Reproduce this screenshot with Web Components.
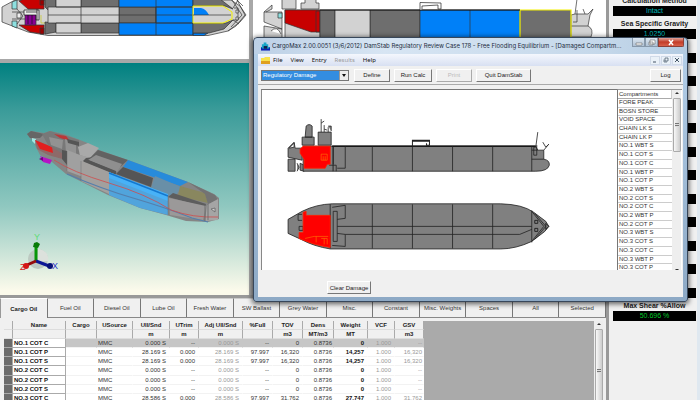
<!DOCTYPE html>
<html lang="en">
<head>
<meta charset="utf-8">
<title>CargoMax</title>
<style>
html,body{margin:0;height:100%;overflow:hidden}
body{font-family:"Liberation Sans",Arial,sans-serif;font-size:6px;color:#222;background:#f0f0f0}
</style>
</head>
<body>
<cargo-app></cargo-app>
<script>
const make = (name, html, setup) => {
  const t = document.createElement('template');
  t.innerHTML = html;
  customElements.define(name, class extends HTMLElement {
    constructor() {
      super();
      this.attachShadow({mode: 'open'}).append(t.content.cloneNode(true));
    }
    connectedCallback() { if (setup) setup.call(this, this.shadowRoot); }
  });
};

/* Colour-coded tank plan, seen from above */
make('tank-plan', `
<style>:host{display:block;background:#fff;overflow:hidden}svg{display:block;width:100%}</style>
<svg viewBox="0 0 249 59" stroke="#333" stroke-width=".7" aria-hidden="true">
<path d="M2 7 15 0H231L240 6 246 15 240 22 228 31 208 35.500H48L28 32 2 22Z" fill="#d2d2d2"/>
<path d="M12 2 17 0V9H12ZM12 21H17V28L12 26Z" fill="#8ee0e0"/>
<path d="M19 1 24-1H44V9H28ZM19 25H44V34L30 32Z" fill="#c80000"/>
<path d="M40 0H44V5H40ZM40 28H44V34H40Z" fill="#900"/>
<path d="M12 12H25M12 19H25M17 9 23 16 17 24" fill="none"/>
<path d="M17 13H21V18H17Z" fill="#eee"/>
<path d="M25 14H36V25H25Z" fill="#8a0094"/>
<path d="M24 10H39V20H36V15H24Z" fill="#eee" stroke="#111"/>
<path d="M26 12H37M28 15V24M32 15V24M37 9V20" stroke="#111"/>
<path d="M41 15V23H45" stroke="#c8c820" fill="none"/>
<path d="M45-1H56V7L48 10 45 7ZM81-1H119V7H81ZM45 22 56 23V32L45 34ZM81 23H119V33H81ZM119 7H156V23H119Z" fill="#6e6e6e"/>
<path d="M56-1H81V7H56ZM56 23H81V33H56ZM48 7H119V23H48Z" fill="#d2d2d2"/>
<path d="M81 7V23M48 15H156"/>
<path d="M119-1H193V7H119ZM119 23H193V35H119ZM156 7H193V23H156ZM193 33H208L204 35.500H193Z" fill="#0080f8"/>
<path d="M156-1V35M156 15H193"/>
<path d="M193-1H220L233 9 225 6H193ZM193 23H226L233 20 224 29 209 33H193Z" fill="#6e6e6e"/>
<path d="M193 6H223L232 12V19L223 23H193Z" fill="#d2d2d2" stroke="#f4f000" stroke-width="1"/>
<path d="M194 8H201Q206 9 209 15H194Z" fill="#0080f8" stroke="none"/>
<path d="M193 15H231" />
<path d="M233 8 238 0M233 20 239 24M234 8H238V20H233M243 6 237 0 245 15 236 26 228 31M232 0 242 15 231 27" fill="none"/>
<path d="M236 10H238V13H236ZM236 17H238V20H236Z" fill="#fff"/>
</svg>`);

/* Colour-coded tank profile, seen from the side */
make('tank-profile', `
<style>:host{display:block;background:#fff;overflow:hidden}svg{display:block;width:100%}</style>
<svg viewBox="253 0 353 60" stroke="#333" stroke-width=".7" aria-hidden="true">
<path d="M264 12 272 5V9L266 12M264 12H282V60H264V26L282 29 264 22Z" fill="#d2d2d2"/>
<path d="M278 13H282V18H278Z" fill="#8ee0e0"/>
<path d="M282-1H296V9H282ZM301 3H305V-1H316V3H319V9H301Z" fill="#d2d2d2"/>
<path d="M271 31Q277 25 281 34" fill="#fff"/>
<path d="M285 10H320V40H285Z" fill="#d2d2d2"/>
<path d="M285 10H320V32H311L285 23Z" fill="#c80000"/><path d="M316 11V32H320V11Z" fill="#c80000"/>
<path d="M320 10H335V60H320ZM370 10H420V60H370Z" fill="#6e6e6e"/>
<path d="M335 10H370V60H335Z" fill="#d2d2d2"/>
<path d="M420 10H520V60H420ZM470 10V60" fill="#0080f8"/>
<path d="M571 15 575 14H588L593 9 590 15 588 26Q594 29 591 37H571Z" fill="#d2d2d2"/>
<path d="M573 22H577V10M577-1 575 14M583 9 585 14M571 26H588" fill="none"/>
<path d="M520 10H571V60H520Z" fill="#6e6e6e" stroke="#f4f000" stroke-width="1.2"/>
<path d="M320 10H520" stroke="#111" stroke-width="1.2"/>
<path d="M420 10V2.500L441 3V9H438V5L422 6V9" fill="#fff" stroke="#222"/>
</svg>`);

/* Shaded model of the ship with the axis marker */
make('ship-model', `
<style>:host{display:block;overflow:hidden;background:linear-gradient(#008080,#3a9b99 20%,#90c8c0 62%,#fbfaeb 98%)}svg{display:block;width:100%}</style>
<svg viewBox="0 63 249 232" aria-hidden="true">
<path d="M27 134 31 131 44 133 50 131 64 134 80 140 90 144 93 148 128 160 188 182 214 194 219 198V219L208 222 186 221 166 215 140 208 108 195 84 183 66 174 52 162 40 155 34 143Z" fill="#858585"/>
<path d="M27 134 31 131 44 134 40 138 30 138Z" fill="#666"/>
<path d="M32 138 36 139 35 144 32 141Z" fill="#9fe8e2"/>
<path d="M35 140 50 146 66 151V160L48 155 37 149Z" fill="#8d6a69"/>
<path d="M35 140 52 147 53 153 40 149Z" fill="#e21f1f"/>
<path d="M42 134 50 131 70 137 79 140V160L65 155 48 145Z" fill="#777" opacity=".9"/>
<path d="M54 134 66 136 70 141 60 138Z" fill="#bd3737"/>
<path d="M49 137 63 140 62 149 51 145ZM65 139 76 143V157L66 153Z" fill="#929292"/>
<path d="M67 139 79 142V146L68 143ZM62 150 67 151V165L62 159Z" fill="#555"/>
<path d="M40 156 52 160 50 164 43 162Z" fill="#b514c5"/><path d="M39 159 43 157V161Z" fill="#780085"/>
<path d="M67 150 80 155 92 158 83 177 67 171Z" fill="#a0a0a0"/>
<path d="M78 147 88 143 99 148 90 158 80 155Z" fill="#a9a9a9"/>
<path d="M98 150 128 160 120 167 90 158Z" fill="#626262"/>
<path d="M94 157 119 166 116 173 83 161 86 158Z" fill="#575757"/>
<path d="M96 155 122 164 117 172 88 160Z" fill="#8f8f8f"/>
<path d="M86 159 116 171 116 175 83 162Z" fill="#555"/>
<path d="M82 161 109 172V194L81 181Z" fill="#a2a09e"/>
<path d="M128 160 188 182 180 186 123 167Z" fill="#278bdb"/>
<path d="M123 167 153 178 151 187 116 174Z" fill="#555"/>
<path d="M155 176 181 187 175 198 151 188Z" fill="#698fa7"/>
<path d="M109 172 168 196V215L140 208 109 195Z" fill="#51a4dc"/>
<path d="M109 172 168 194V201L109 178Z" fill="#48b2f7"/>
<path d="M109 173 168 196" stroke="#1378cf" stroke-width="1.500"/>
<path d="M180 186 205 193 208 203 178 196Z" fill="#89875f"/>
<path d="M173 193 206 204 205 207 168 197Z" fill="#5d5d5d"/>
<path d="M169 198 206 206 203 220 170 215Z" fill="#9b9999"/>
<path d="M188 182 215 195 218 200 208 204 205 194Z" fill="#737373"/>
<path d="M207 205 218 199V220L205 221Z" fill="#a5a5a5"/>
<path d="M67 174Q102 189 133 198T192 218L208 222" stroke="#547fac" fill="none" stroke-width="1.200"/>
<path d="M54 160Q72 172 109 183T171 210Q193 218 218 217" stroke="#cf4b4b" fill="none" stroke-width=".8"/>
<path d="M205 205V221M208 204V220M211 209 215 208V212Z" stroke="#666" fill="#ccc" stroke-width=".8"/>
<path d="M81 161V181M67 151V171M168 196V215" stroke="#666" stroke-width=".4"/>
<circle cx="38" cy="259" r="10" fill="#bcc9c1"/><path d="M38 249A10 10 0 0 1 48 261L37 262Z" fill="#dce1dc"/>
<path d="M36 261V247" stroke="#079607" stroke-width="3"/><path d="M33 247 34 243 37 242 40 244 38 248Z" fill="#087b08"/>
<path d="M36 261 49 266" stroke="#0b1696" stroke-width="3"/><ellipse cx="50" cy="266" rx="3" ry="3" fill="#061177"/>
<path d="M36 261 27 265" stroke="#950b0b" stroke-width="3"/><ellipse cx="26" cy="266" rx="3" ry="3" fill="#d41616"/>
<g font-family="Liberation Sans,sans-serif" font-size="9"><text x="34" y="240" fill="#5fdc78">Y</text><text x="52" y="269" fill="#2636c8">X</text><text x="20" y="270" fill="#d61818">Z</text></g>
</svg>`);

/* Grey profile and plan with the damaged compartment in red */
make('damage-view', `
<style>:host{display:block;background:#fff;overflow:hidden}svg{display:block;width:100%}</style>
<svg viewBox="262 90 354 179" fill="#808080" stroke="#222" stroke-width=".8" aria-hidden="true">
<path d="M288 148 294 142 295 148H302V160L288 157Z"/>
<path d="M289 148 294 143 294 147Z" fill="#fff"/>
<path d="M288 159H295V171H288ZM297 163 299 167 297 171M300 163V170L304 171V165Z"/>
<path d="M302 137H314V145H302ZM305 137 306 126Q309 123 312 126V137ZM318 132H331V145H318ZM321 132V119M321 123 324 121M324 132V125M328 132V127M331 131V126H328M324 129 327 130" />
<path d="M303 146H333V171H303Z"/>
<path d="M333 146H535L537 150H543V159Q549 160 548.500 165 547 171 535 171H333Z"/>
<path d="M332 146H535" stroke="#000" stroke-width="1.300"/>
<path d="M337 168H345V146M372 146V171M412 146V171M452 146V171M492 146V171M531 146V171M333 146V164M329 165H336V171" fill="none"/>
<path d="M300 149 303 146H330V164H327L325 168H304V159L300 153Z" fill="#f00" stroke="#f20"/>
<path d="M321 154H327V160H321ZM323 156V160M325 156V160" fill="none" stroke="#ff7a00" stroke-width=".6"/>
<path d="M412 146V140H429V145H426V143M412 141H429" fill="none" stroke-width="1"/>
<path d="M537 132 535 147H533V155H536V145M531 159H543M537 150H531M542 142 545 147 548 144 543 150" fill="none"/>
<path d="M288 219 302 211Q316 204 332 203.500H500Q522 204 533 212L545 221 548 226 544 231 531 241Q515 248.500 500 248.500H330Q314 246 301 239L288 233Z"/>
<path d="M330 204V248M332 207 345 205V218L337 219M337 233 345 234V246L332 245M333 211H337V241H333ZM337 226H531M345 234H519L531 229M372 204V248M412 204V248M452 204V248M492 204V248M531 210V242M531 211 543 226 531 241M534 213 545 226 534 239M302 214H298V220H302M299 226H303V230H299Z" fill="none"/>
<path d="M534 220H537V223H534ZM534 228H537V231H534ZM545 223 548 226 545 229Z" stroke="#111"/>
<path d="M303 212 306 211V215H330V247Q314 245 299 238V232H303Z" fill="#f00" stroke="#f20"/>
<path d="M305 238 314 236H328M316 236V242M321 238H327V244M324 238V244" fill="none" stroke="#ff7a00" stroke-width=".6"/>
</svg>`);

make('value-meter', `
<style>
:host{display:grid;grid-template-rows:1fr 10px;text-align:center}
b{align-self:end;font-size:7px;line-height:11px;white-space:nowrap;color:#222}
output{display:block;background:#000;color:var(--ink,#00b8b8);font-size:7px;line-height:10px}
</style><b><slot name="label"></slot></b><output><slot></slot></output>`);

make('side-panel', `
<style>
:host{display:block;background:#f0f0f0;border-left:3px solid #999;border-right:3px solid #dfe8f0;box-sizing:border-box;overflow:hidden}
div{display:flex;flex-direction:column;height:329px;margin:-8px 1px 0 4px}
value-meter{flex:1}.green{--ink:#00c828}
</style>
<div><value-meter><span slot="label">Calculation Method</span>Intact</value-meter>
<value-meter><span slot="label">Sea Specific Gravity</span>1.0250</value-meter>
${'<value-meter></value-meter>'.repeat(11)}
<value-meter class="green"><span slot="label">Max Shear %Allow</span>50.696 %</value-meter></div>`);

make('scroll-rail', `
<style>
:host{display:flex;flex-direction:column;align-items:center;background:#eee;width:9px}
i{width:0;border:2px solid transparent}
.up{border-bottom-color:#333;margin:2px 0 4px;border-top-width:0}
.down{border-top-color:#333;margin:4px 0 2px;border-bottom-width:0}
.thumb{box-sizing:border-box;width:8px;flex:0 0 var(--thumb,32%);border:1px solid #aaa;border-radius:1px;background:linear-gradient(90deg,#f8f8f8,#ccc);display:grid;place-items:center}
.thumb span{width:4px;height:4px;background:repeating-linear-gradient(#777 0 1px,#ddd 1px 2px)}
.rest{flex:1}
</style><i class="up"></i><div class="thumb"><span></span></div><div class="rest"></div><i class="down"></i>`);

make('tab-strip', `
<style>
:host{display:flex;background:#f0f0f0;border-bottom:1px solid #888}
button{flex:1;min-width:0;padding:0;margin:0;height:19px;border:0;border-right:1px solid #777;border-top:1px solid #ccc;background:#f0f0f0;font:6px "Liberation Sans",sans-serif;color:#333;white-space:nowrap}
button[aria-selected=true]{font-weight:bold;color:#222;border-top:1px solid #fff;margin-bottom:-1px;height:20px;border-left:1px solid #999}
</style>`, function (root) {
  root.host.setAttribute('role', 'tablist');
  ['Cargo Oil','Fuel Oil','Diesel Oil','Lube Oil','Fresh Water','SW Ballast','Grey Water','Misc.','Constant','Misc. Weights','Spaces','All','Selected'].forEach((n, i) => {
    const b = document.createElement('button');
    b.setAttribute('role', 'tab');
    b.setAttribute('aria-selected', String(i === 0));
    b.textContent = n;
    root.append(b);
  });
});

make('tank-table', `
<style>
:host{display:block}
table{table-layout:fixed;width:420px;height:82px;border-collapse:separate;border-spacing:0;background:#fff;font-size:6px;line-height:8px;color:#333}
th,td{padding:0 3px 0 0;border-right:1px solid #d4d4d4;border-bottom:1px solid #ddd;text-align:right;white-space:nowrap;overflow:hidden;box-sizing:border-box}
thead th{background:#f0f0f0;text-align:center;padding:0;border-right-color:#aaa;color:#222}
tbody th{text-align:left;padding:0 0 0 1px;color:#111;border-color:#aaa}
tbody td{border-right-color:transparent;border-bottom-color:#f2f2f2}
tbody td:first-child{background:#6b6b6b;border-color:#aaa}
td:nth-child(4){text-align:left;padding-left:1px}
td:nth-child(10){padding-right:1px}
td:nth-child(11){font-weight:bold;color:#111}
td:nth-child(7),td:nth-child(12),td:nth-child(13){color:#999}
td:nth-child(13){padding-right:1px}
tbody tr:first-child td:not(:first-child){background:#c6c6c6}
</style>
<table><colgroup></colgroup><thead></thead><tbody></tbody></table>`, function (root) {
  root.querySelector('colgroup').innerHTML = [9,53,31,36,37,29,44,30,30,31,34,27,29].map(w => `<col style="width:${w}px">`).join('');
  const row = (cells, tag) => '<tr>' + cells.map((c, i) => { const t = i === 1 ? 'th' : tag; return `<${t}>${c}</${t}>`; }).join('') + '</tr>';
  root.querySelector('thead').innerHTML =
    row(['','Name','Cargo','USource','Ull/Snd','UTrim','Adj Ull/Snd','%Full','TOV','Dens','Weight','VCF','GSV'], 'th') +
    row(['','','','','m','m','m','','m3','MT/m3','MT','','m3'], 'th');
  const empty = n => ['',n,'','MMC','0.000 S','--','0.000 S','--','0','0.8736','0','1.000','--'];
  const full = (n, u, v, w) => ['',n,'','MMC',u,'0.000',u,'97.997',v,'0.8736',w,'1.000',v];
  root.querySelector('tbody').innerHTML = [
    empty('NO.1 COT C'), full('NO.1 COT P','28.169 S','16,320','14,257'), full('NO.1 COT S','28.169 S','16,320','14,257'),
    empty('NO.2 COT C'), empty('NO.2 COT P'), empty('NO.2 COT S'), full('NO.3 COT C','28.586 S','31,762','27,747')
  ].map(r => row(r, 'td')).join('');
});

make('compartment-list', `
<style>
:host{display:grid;grid-template-columns:1fr 10px;background:#fff;border-left:1px solid #777;border-top:1px solid #999;overflow:hidden;font-size:6px;line-height:7px;color:#333}
h2{margin:0;font:6px/8px "Liberation Sans",sans-serif;padding-left:1px;border-bottom:1px solid #aaa;border-right:1px solid #ccc}
ul{margin:0;padding:0;list-style:none;display:grid;grid-auto-rows:1fr;height:174px}
li{border-bottom:1px solid #ccc;padding-left:1px;box-sizing:border-box;white-space:nowrap}
section{min-width:0}
scroll-rail{--thumb:54px}
</style><section><h2>Compartments</h2><ul></ul></section><scroll-rail></scroll-rail>`, function (root) {
  const names = ['FORE PEAK','BOSN STORE','VOID SPACE','CHAIN LK S','CHAIN LK P'];
  for (const n of [1,2,3]) for (const k of ['WBT S','COT S','COT C','WBT P','COT P']) names.push(`NO.${n} ${k}`);
  root.querySelector('ul').innerHTML = names.map(n => `<li>${n}</li>`).join('');
});

make('push-button', `
<style>
:host{display:inline-block}
button{width:100%;height:13px;padding:0;border:1px solid;border-color:#fff #777 #777 #fff;background:#f0f0f0;font:6px "Liberation Sans",sans-serif;color:#222}
:host([off]) button{color:#bbb;border-color:#fff #aaa #aaa #fff}
</style><button><slot></slot></button>`, function (root) {
  root.querySelector('button').disabled = this.hasAttribute('off');
});

make('title-bar', `
<style>
:host{display:flex;align-items:flex-start;height:16px;padding-left:3px;gap:2px}
svg{width:9px;height:9px;margin-top:4px;flex:none}
h1{flex:1;min-width:0;margin:0;font:6px/10px Inter,sans-serif;padding-top:3px;color:#1c2b3c;white-space:nowrap;overflow:hidden;text-overflow:ellipsis}
div{display:flex;margin-right:-1px}
button{width:13px;height:9px;padding:0;border:1px solid #8798aa;border-top:0;background:linear-gradient(#dce6f0,#afc1d4);display:grid;place-items:center}
button:last-child{width:26px;background:linear-gradient(#e0a49a,#c33c28 50%,#d8604a);border-color:#8c4038;border-radius:0 0 2px 0}
button svg{margin:0;width:8px;height:7px}
</style>
<svg viewBox="0 0 10 9" aria-hidden="true"><path d="M0 5H10V9H0Z" fill="#0b1fb5"/><path d="M1 2H3V0H6V2H8V5H10L8 7H2L0 5H1Z" fill="#18a6c8"/><path d="M3 4H7V7H3Z" fill="#102050"/></svg>
<h1><slot></slot></h1>
<div><button aria-label="Minimize"><svg viewBox="0 0 8 7"><path d="M1 4H7V6H1Z" fill="#fff" stroke="#666" stroke-width=".6"/></svg></button>
<button aria-label="Maximize"><svg viewBox="0 0 8 7"><path d="M2 1H7V5H2ZM1 3H5V6H1Z" fill="#fff" stroke="#666" stroke-width=".6"/></svg></button>
<button aria-label="Close"><svg viewBox="0 0 8 7"><path d="M2 1 6 6M6 1 2 6" stroke="#fff" stroke-width="1.500"/></svg></button></div>`);

make('menu-bar', `
<style>
:host{display:flex;align-items:center;height:12px;padding-left:3px;background:linear-gradient(#f4f7fd,#d8e0f2)}
svg{width:9px;height:8px;margin-right:2px}
button{border:0;padding:0;margin:0;background:none;font:6px/10px "Noto Sans",sans-serif;color:#111;height:12px}
nav{display:flex;flex:1;gap:8px;padding-left:1px}
button:disabled{color:#999}
div{display:flex;gap:1px;padding-right:1px}
div button{width:10px;height:9px;border:1px solid #d0dae8;background:#eaf1f8;display:grid;place-items:center}
div svg{margin:0;width:6px;height:6px}
</style>
<svg viewBox="0 0 9 8" aria-hidden="true"><path d="M0 2H3L4 1H9V5H0Z" fill="#f8e24c"/><path d="M0 5H9V8H0Z" fill="#e0a01c"/></svg>
<nav><button>File</button><button>View</button><button>Entry</button><button disabled>Results</button><button>Help</button></nav>
<div><button aria-label="Minimize document"><svg viewBox="0 0 6 6"><path d="M1 5H4" stroke="#456"/></svg></button><button aria-label="Restore document"><svg viewBox="0 0 6 6"><path d="M2 1H5V4H2ZM1 2.500V5H4" stroke="#456" stroke-width=".7" fill="none"/></svg></button><button aria-label="Close document"><svg viewBox="0 0 6 6"><path d="M1 1 5 5M5 1 1 5" stroke="#456"/></svg></button></div>`);

make('tool-bar', `
<style>
:host{display:flex;align-items:center;height:18px;padding:0 2px 0 3px;gap:4px;border-bottom:1px solid #aaa;background:#f0f0f0}
.pick{display:grid;grid-template-columns:1fr 9px;width:88px;height:11px;box-sizing:border-box;border:1px solid #777;background:#fff;margin-right:1px}
select{grid-area:1/1/2/3;appearance:none;border:0;padding:0 0 0 1px;margin:0;height:9px;font:6px/9px "Liberation Sans",sans-serif;color:#fff;background:linear-gradient(#338de0,#338de0) no-repeat;background-size:calc(100% - 9px) 100%;outline:0}
i{grid-area:1/2;pointer-events:none;background:#eee;border-left:1px solid #999;display:grid;place-items:center}
i::after{content:"";border:2px solid transparent;border-top:3px solid #111;border-bottom:0}
.s{width:36px}.m{width:38px}.l{width:55px}.log{width:31px;margin-left:auto}
</style>
<label class="pick"><select aria-label="Damage type"><option>Regulatory Damage</option></select><i></i></label>
<push-button class="s">Define</push-button><push-button class="m">Run Calc</push-button><push-button class="s" off>Print</push-button><push-button class="l">Quit DamStab</push-button><push-button class="log">Log</push-button>`);

make('damage-window', `
<style>
:host{display:block;box-sizing:border-box;border:1px solid #38475a;border-radius:4px 4px 3px 3px;padding:0 4px 4px;background:linear-gradient(90deg,#bcd0e6,#d7e5f3 30%,#c5d8ea 80%,#b3cbe2) top/100% 16px no-repeat,linear-gradient(#b5d0ea,#8da9c5);box-shadow:0 1px 5px 1px #0009}
main{background:#f0f0f0}
.work{display:grid;grid-template-columns:minmax(0,1fr) 65px;height:181px;margin:4px 1px 0 3px}
damage-view{border-left:1px solid #888;border-top:1px solid #777}
footer{height:27px;display:flex;align-items:center;padding:2px 0 0 69px;box-sizing:border-box}
footer push-button{width:44px;margin-top:6px}
</style>
<title-bar>CargoMax 2.00.0051 (3/6/2012) DamStab Regulatory Review Case 178 - Free Flooding Equilibrium - [Damaged Compartm...</title-bar>
<menu-bar></menu-bar>
<main><tool-bar></tool-bar>
<div class="work"><damage-view></damage-view><compartment-list></compartment-list></div>
<footer><push-button>Clear Damage</push-button></footer></main>`);

make('cargo-app', `
<style>
:host{display:grid;grid-template-columns:minmax(0,1fr) 94px;grid-template-rows:minmax(0,1fr) 105px;height:100vh;position:relative;overflow:hidden}
side-panel{grid-area:1/2/3/3}
.views{display:grid;grid-template-columns:249fr 4px 353fr;min-height:0;background:#a8a8a8}
.left{display:grid;grid-template-rows:59px minmax(0,1fr);row-gap:4px;min-width:0;min-height:0}
.profile{grid-column:3}
.tanks{display:flex;flex-direction:column;min-height:0;border-top:3px solid #999}
.grid{flex:1;min-height:0;display:flex;justify-content:space-between;background:#aaa;border-top:3px solid #f0f0f0;border-left:4px solid #f0f0f0;border-right:3px solid #f0f0f0;overflow:hidden}
.grid scroll-rail{--thumb:84px;overflow:hidden}
damage-window{position:absolute;left:253px;right:12px;top:37px}
</style>
<div class="views"><div class="left"><tank-plan></tank-plan><ship-model></ship-model></div><tank-profile class="profile"></tank-profile></div>
<div class="tanks"><tab-strip></tab-strip><div class="grid"><tank-table></tank-table><scroll-rail></scroll-rail></div></div>
<side-panel></side-panel>
<damage-window></damage-window>`);
</script>
</body>
</html>
